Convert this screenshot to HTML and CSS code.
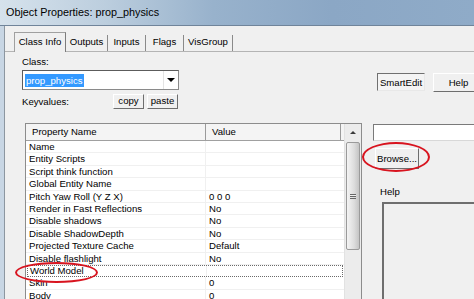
FILE: index.html
```html
<!DOCTYPE html>
<html lang="en">
<head>
  <meta charset="UTF-8">
  <meta name="viewport" content="width=device-width, initial-scale=1.0">
  <title>Object Properties</title>
  <link rel="stylesheet" href="styles.css">
</head>
<body>
  <div class="window">
    <div class="titlebar">Object Properties: prop_physics</div>

    <div class="client">
      <!-- tabs -->
      <div class="tabs">
        <div class="tab active">Class Info</div>
        <div class="tab tab-outputs">Outputs</div>
        <div class="tab tab-inputs">Inputs</div>
        <div class="tab tab-flags">Flags</div>
        <div class="tab tab-visgroup">VisGroup</div>
      </div>

      <div class="panel">
        <!-- left: class + keyvalues -->
        <div class="left">
          <div class="label">Class:</div>
          <div class="combo">
            <span class="combo-text">prop_physics</span>
            <span class="combo-arrow"></span>
          </div>

          <div class="kv-row">
            <span class="kv-label">Keyvalues:</span>
            <button class="btn small">copy</button>
            <button class="btn small">paste</button>
          </div>

          <div class="list">
            <div class="list-main">
              <div class="list-head">
                <div class="head-cell head-name">Property Name</div>
                <div class="head-cell head-value">Value</div>
              </div>
              <div class="list-rows">
                <div class="row"><span class="cell-name">Name</span><span class="cell-value"></span></div>
                <div class="row"><span class="cell-name">Entity Scripts</span><span class="cell-value"></span></div>
                <div class="row"><span class="cell-name">Script think function</span><span class="cell-value"></span></div>
                <div class="row"><span class="cell-name">Global Entity Name</span><span class="cell-value"></span></div>
                <div class="row"><span class="cell-name">Pitch Yaw Roll (Y Z X)</span><span class="cell-value">0 0 0</span></div>
                <div class="row"><span class="cell-name">Render in Fast Reflections</span><span class="cell-value">No</span></div>
                <div class="row"><span class="cell-name">Disable shadows</span><span class="cell-value">No</span></div>
                <div class="row"><span class="cell-name">Disable ShadowDepth</span><span class="cell-value">No</span></div>
                <div class="row"><span class="cell-name">Projected Texture Cache</span><span class="cell-value">Default</span></div>
                <div class="row"><span class="cell-name">Disable flashlight</span><span class="cell-value">No</span></div>
                <div class="row focused"><span class="cell-name">World Model</span><span class="cell-value"></span></div>
                <div class="row"><span class="cell-name">Skin</span><span class="cell-value">0</span></div>
                <div class="row"><span class="cell-name">Body</span><span class="cell-value">0</span></div>
              </div>
            </div>
            <div class="scrollbar">
              <div class="scroll-up"></div>
              <div class="thumb"><span class="grip"></span></div>
            </div>
          </div>
        </div>

        <!-- right: smartedit, value, help -->
        <div class="right">
          <div class="top-buttons">
            <button class="btn smartedit">SmartEdit</button>
            <button class="btn help-btn">Help</button>
          </div>
          <div class="value-box"></div>
          <button class="btn browse">Browse...</button>
          <div class="label help-label">Help</div>
          <div class="help-box"></div>
        </div>
      </div>
    </div>

    <!-- red annotation circles -->
    <div class="mark mark-model"></div>
    <div class="mark mark-browse"></div>
  </div>
</body>
</html>
```

FILE: styles.css
```css
* {
  box-sizing: border-box;
}

body {
  margin: 0;
  font-family: "Liberation Sans", Arial, sans-serif;
  font-size: 9.6px;
  color: #000;
}

.window {
  position: relative;
  width: 474px;
  height: 299px;
  overflow: hidden;
  background: #c8d6e4;
}

.titlebar {
  height: 26px;
  padding: 6px 0 0 6px;
  font-size: 10.8px;
  background: linear-gradient(to right, #d6e2ec 0%, #bccede 22%, #98b2cc 45%, #8ba7c5 70%, #8fabc8 100%);
  border-bottom: 1px solid #70849a;
}

.client {
  margin-left: 4px;
  height: 273px;
  background: #f0f0f0;
  border-left: 1px solid #8c96a0;
}

/* tabs */
.tabs {
  display: flex;
  align-items: flex-end;
  height: 26px;
  padding: 6px 0 0 9px;
  border-bottom: 1px solid #b4b4b4;
}

.tab {
  height: 16px;
  line-height: 14px;
  text-align: center;
  border-right: 1px solid #8a8a8a;
}

.tab.active {
  width: 52px;
  height: 20px;
  line-height: 17px;
  margin-bottom: -1px;
  background: #f0f0f0;
  border: 1px solid #a0a0a0;
  border-bottom: none;
  border-right-color: #7c7c7c;
}

.tab-outputs { width: 42px; }
.tab-inputs { width: 38px; }
.tab-flags { width: 38px; }
.tab-visgroup { width: 49px; }

.panel {
  display: flex;
  align-items: flex-start;
}

.label {
  line-height: 12px;
}

/* left column */
.left {
  width: 357px;
  padding-left: 17px;
}

.left > .label {
  margin-top: 4px;
}

.combo {
  display: flex;
  align-items: center;
  width: 157px;
  height: 20px;
  margin-top: 2px;
  padding-left: 2px;
  background: #fff;
  border: 1px solid #8a8a8a;
  border-top-color: #5c5c5c;
  border-left-color: #5c5c5c;
}

.combo-text {
  height: 13px;
  line-height: 13px;
  padding: 0 1px;
  background: #3399ff;
  color: #fff;
}

.combo-arrow {
  margin-left: auto;
  width: 15px;
  height: 18px;
  border-left: 1px solid #e4e4e4;
  display: flex;
  align-items: center;
  justify-content: center;
}

.combo-arrow::after {
  content: "";
  border-left: 4px solid transparent;
  border-right: 4px solid transparent;
  border-top: 4px solid #000;
}

.kv-row {
  display: flex;
  align-items: center;
  height: 16px;
  margin-top: 3px;
}

.kv-label {
  width: 91px;
}

.btn {
  font-family: inherit;
  font-size: 9.6px;
  color: #000;
  padding: 0;
  background: #f0f0f0;
  border: 1px solid #fff;
  border-right-color: #6e6e6e;
  border-bottom-color: #6e6e6e;
}

.btn.small {
  width: 31px;
  height: 15px;
  line-height: 12px;
  margin-right: 3px;
}

/* property list */
.list {
  display: flex;
  width: 337px;
  height: 190px;
  margin: 14px 0 0 3px;
  background: #fff;
  border: 1px solid #8c8c8c;
}

.list-main {
  width: 318px;
}

.list-head {
  display: flex;
  height: 17px;
  background: #f4f4f4;
  border-bottom: 1px solid #a0a0a0;
}

.head-cell {
  padding: 2px 0 0 6px;
  border-right: 1px solid #9a9a9a;
}

.head-name { width: 180px; }
.head-value { width: 135px; }

.row {
  display: flex;
  height: 12.4px;
  line-height: 12.4px;
  border-bottom: 1px solid #f0f0f0;
}

.cell-name {
  width: 180px;
  padding-left: 3px;
  border-right: 1px solid #f0f0f0;
}

.cell-value {
  padding-left: 3px;
}

.row.focused {
  width: 316px;
  margin-left: 1px;
  border: 1px dotted #6a6a6a;
  line-height: 10.4px;
}

.row.focused .cell-name {
  width: 179px;
  padding-left: 2px;
}

.scrollbar {
  width: 17px;
  background: #ececec;
  border-left: 1px solid #e2e2e2;
}

.scroll-up {
  height: 17px;
  display: flex;
  align-items: center;
  justify-content: center;
}

.scroll-up::after {
  content: "";
  border-left: 3px solid transparent;
  border-right: 3px solid transparent;
  border-bottom: 3px solid #3a3a3a;
}

.thumb {
  display: flex;
  align-items: center;
  justify-content: center;
  width: 14px;
  height: 108px;
  margin: 1px 0 0 1px;
  background: linear-gradient(to right, #f4f4f4, #dcdcdc 60%, #c4c4c4);
  border: 1px solid #9a9a9a;
  border-radius: 2px;
}

.grip {
  width: 6px;
  height: 5px;
  border-top: 1px solid #666;
  border-bottom: 1px solid #666;
  background: linear-gradient(#f0f0f0 0 1px, #666 1px 2px, transparent 2px);
}

/* right column */
.right {
  flex: 1;
}

.top-buttons {
  display: flex;
  align-items: flex-start;
  margin-top: 21px;
  padding-left: 15px;
}

.smartedit {
  width: 48px;
  height: 18px;
  border-color: #707070;
  border-right-color: #e8e8e8;
  border-bottom-color: #e8e8e8;
  background: #f4f4f4;
}

.help-btn {
  width: 50px;
  height: 19px;
  margin-left: 8px;
  border-right: none;
}

.value-box {
  width: 110px;
  height: 17px;
  margin: 32px 0 0 11px;
  background: #fff;
  border: 1px solid #d8d8d8;
  border-top-color: #7a7a7a;
  border-left-color: #7a7a7a;
}

.browse {
  display: block;
  width: 44px;
  height: 21px;
  margin: 7px 0 0 13px;
}

.help-label {
  margin: 17px 0 0 18px;
}

.help-box {
  width: 100px;
  height: 110px;
  margin: 4px 0 0 20px;
  background: #f0f0f0;
  border-top: 2px solid #6e6e6e;
  border-left: 2px solid #6e6e6e;
}

/* annotation */
.mark {
  position: absolute;
  border: 2.5px solid #d8141f;
  border-radius: 50%;
}

.mark-model {
  left: 15px;
  top: 262px;
  width: 83px;
  height: 21px;
}

.mark-browse {
  left: 362px;
  top: 142px;
  width: 68px;
  height: 30px;
}
```
